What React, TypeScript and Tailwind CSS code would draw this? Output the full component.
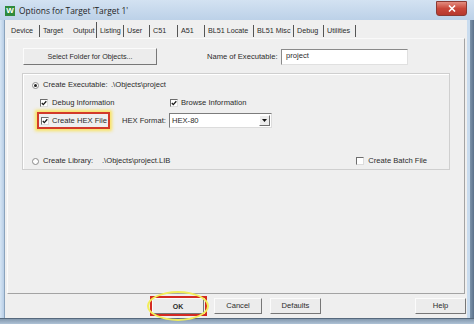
import React from 'react';

const tabs = [
  { label: 'Device', w: 'w-[32px]' },
  { label: 'Target', w: 'w-[31px]', noSep: true },
  { label: 'Output', w: 'w-[26px]', active: true },
  { label: 'Listing', w: 'w-[27px]' },
  { label: 'User', w: 'w-[26px]' },
  { label: 'C51', w: 'w-[28px]' },
  { label: 'A51', w: 'w-[27px]' },
  { label: 'BL51 Locate', w: 'w-[49px]' },
  { label: 'BL51 Misc', w: 'w-[40px]' },
  { label: 'Debug', w: 'w-[30px]' },
  { label: 'Utilities', w: 'w-[32px]' },
];

function CheckBox({ checked }: { checked?: boolean }) {
  return (
    <span className="inline-flex h-[8px] w-[8px] shrink-0 items-center justify-center border border-t-[#6d6d6d] border-l-[#6d6d6d] border-r-[#dcdcdc] border-b-[#dcdcdc] bg-white">
      {checked && (
        <svg width="6" height="6" viewBox="0 0 6 6">
          <path d="M0.8 3 L2.3 4.6 L5.3 1.2" fill="none" stroke="#1a1a1a" strokeWidth="1.3" />
        </svg>
      )}
    </span>
  );
}

function Radio({ checked }: { checked?: boolean }) {
  return (
    <span className="inline-flex h-[7px] w-[7px] shrink-0 items-center justify-center rounded-full border border-[#8a8a8a] bg-white">
      {checked && <span className="h-[3px] w-[3px] rounded-full bg-[#222]" />}
    </span>
  );
}

function Btn({ children, w, h = 'h-[16px]' }: { children: React.ReactNode; w: string; h?: string }) {
  return (
    <div className={`${w} ${h} flex items-center justify-center whitespace-nowrap border border-t-[#fbfbfb] border-l-[#fbfbfb] border-r-[#777] border-b-[#777] bg-[#ececec]`}>
      {children}
    </div>
  );
}

export default function App() {
  return (
    <div className="flex h-[324px] w-[474px] flex-col overflow-hidden whitespace-nowrap bg-[#bdd2e8] font-['Liberation_Sans',Arial,sans-serif] text-[7.6px] leading-none text-[#2b2b2b]">
      {/* title bar */}
      <div className="flex h-[20px] shrink-0 items-start bg-gradient-to-b from-[#d3e2f2] to-[#bcd1e8]">
        <div className="ml-[5px] mt-[6px] flex h-[10px] w-[10px] items-center justify-center bg-[#2f8a3c] text-[8px] font-bold text-white">
          W
        </div>
        <span className="ml-[4px] mt-[7px] font-['Open_Sans',sans-serif] text-[8.4px] text-[#1e1e1e]">
          Options for Target 'Target 1'
        </span>
        <div className="ml-auto mr-[7px] mt-[1px] flex h-[15px] w-[31px] items-center justify-center rounded-b-[3px] border border-[#8b3a33] bg-gradient-to-b from-[#e28c80] via-[#c9473a] to-[#b6382d]">
          <svg width="8" height="7" viewBox="0 0 8 7">
            <path d="M1 0.5 L7 6.5 M7 0.5 L1 6.5" stroke="#fff" strokeWidth="1.6" />
          </svg>
        </div>
      </div>

      <div className="flex min-h-0 flex-1">
        {/* left frame */}
        <div className="w-[5px] border-r border-[#8aa3bd] bg-gradient-to-r from-[#d6e5f4] to-[#b8cee6]" />

        {/* client */}
        <div className="flex w-[462px] flex-col bg-[#efefef]">
          {/* tab strip */}
          <div className="flex h-[18px] items-end pl-[3px] text-[7.2px]">
            {tabs.map((t) =>
              t.active ? (
                <div key={t.label} className={`${t.w} flex h-[16px] items-start border-r border-[#555] pl-[2px] pt-[5px]`}>
                  {t.label}
                </div>
              ) : (
                <div
                  key={t.label}
                  className={`${t.w} mb-[1px] flex h-[12px] items-center pl-[3px] ${t.noSep ? '' : 'border-r border-[#555]'}`}
                >
                  {t.label}
                </div>
              )
            )}
          </div>

          {/* tab panel */}
          <div className="ml-[2px] flex h-[256px] w-[458px] flex-col border border-t-[#f9f9f9] border-l-[#fbfbfb] border-r-[#a3a3a3] border-b-[#a3a3a3] pl-[14px] pt-[9px]">
            <div className="flex items-center">
              <div className="ml-[1px]">
                <Btn w="w-[134px]" h="h-[17px]">
                  <span className="text-[7.2px]">Select Folder for Objects...</span>
                </Btn>
              </div>
              <span className="ml-[50px] w-[74px]">Name of Executable:</span>
              <div className="flex h-[16px] w-[127px] items-start border border-t-[#8a8a8a] border-l-[#8a8a8a] border-r-[#e0e0e0] border-b-[#e0e0e0] bg-white pl-[4px] pt-[2px]">
                project
              </div>
            </div>

            {/* group box */}
            <div className="mt-[8px] flex h-[97px] w-[428px] flex-col border border-[#cfcfcf] shadow-[inset_1px_1px_0_#fff]">
              <div className="mt-[6px] flex h-[10px] items-center pl-[9px]">
                <Radio checked />
                <span className="ml-[4px] w-[68px] shrink-0">Create Executable:</span>
                <span>.\Objects\project</span>
              </div>

              <div className="mt-[8px] flex h-[10px] items-center pl-[17px]">
                <CheckBox checked />
                <span className="ml-[4px] w-[118px]">Debug Information</span>
                <CheckBox checked />
                <span className="ml-[3px]">Browse Information</span>
              </div>

              <div className="mt-[5px] flex h-[15px] items-center pl-[14px]">
                <div className="flex h-[17px] w-[73px] items-center border-2 border-[#d23a2a] pl-[2px] shadow-[0_0_3px_2px_rgba(250,225,70,0.85)]">
                  <CheckBox checked />
                  <span className="ml-[3px]">Create HEX File</span>
                </div>
                <span className="ml-[12px] w-[47px]">HEX Format:</span>
                <div className="flex h-[15px] w-[103px] items-center border border-t-[#7c7c7c] border-l-[#7c7c7c] border-r-[#dcdcdc] border-b-[#dcdcdc] bg-white pl-[2px]">
                  <span className="flex-1">HEX-80</span>
                  <div className="mr-[1px] flex h-[11px] w-[11px] items-center justify-center border border-t-[#fff] border-l-[#fff] border-r-[#6f6f6f] border-b-[#6f6f6f] bg-[#ececec]">
                    <svg width="5" height="3" viewBox="0 0 5 3">
                      <path d="M0 0 L5 0 L2.5 3 Z" fill="#111" />
                    </svg>
                  </div>
                </div>
              </div>

              <div className="mt-[28px] flex h-[10px] items-center pl-[9px]">
                <Radio />
                <span className="ml-[4px] w-[59px] shrink-0">Create Library:</span>
                <span>.\Objects\project.LIB</span>
                <div className="ml-auto mr-[22px] flex items-center">
                  <CheckBox />
                  <span className="ml-[4px]">Create Batch File</span>
                </div>
              </div>
            </div>
          </div>

          {/* button row */}
          <div className="flex h-[24px] items-center">
            <div className="relative ml-[145px]">
              <div className="pointer-events-none absolute -left-[3px] -top-[5px] h-[30px] w-[62px] rounded-[50%] border-2 border-[#f2ee5a]" />
              <div className="border-2 border-[#d42a22] pr-[1px]">
                <Btn w="w-[52px]">
                  <span className="font-bold text-[7px]">OK</span>
                </Btn>
              </div>
            </div>
            <div className="ml-[7px]">
              <Btn w="w-[48px]">Cancel</Btn>
            </div>
            <div className="ml-[8px]">
              <Btn w="w-[51px]">Defaults</Btn>
            </div>
            <div className="ml-[94px]">
              <Btn w="w-[51px]">Help</Btn>
            </div>
          </div>
        </div>

        {/* right frame */}
        <div className="flex w-[7px]">
          <div className="w-[3px] bg-[#c9dcef]" />
          <div className="w-[4px] bg-gradient-to-r from-[#7d94ab] to-[#5b718a]" />
        </div>
      </div>

      {/* bottom frame */}
      <div className="h-[6px] shrink-0 border-t border-[#56697d] bg-gradient-to-b from-[#8499ae] to-[#aec2d6]" />
    </div>
  );
}
